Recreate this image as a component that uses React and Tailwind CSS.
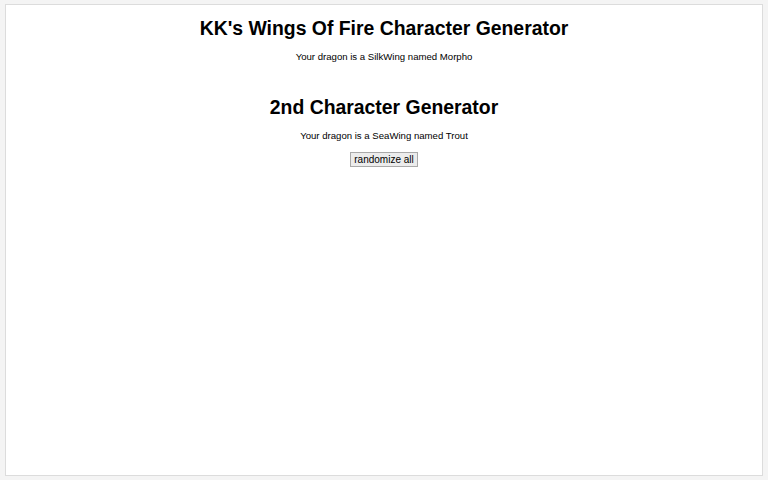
import { useState } from 'react';

const TRIBES = ['SilkWing', 'SeaWing', 'MudWing', 'SandWing', 'SkyWing', 'NightWing', 'RainWing', 'IceWing', 'HiveWing', 'LeafWing'];
const NAMES = ['Morpho', 'Trout', 'Clay', 'Sunny', 'Peril', 'Starflight', 'Glory', 'Winter', 'Cricket', 'Sundew'];

const pick = (list) => list[Math.floor(Math.random() * list.length)];

export default function App() {
  const [first, setFirst] = useState({ tribe: 'SilkWing', name: 'Morpho' });
  const [second, setSecond] = useState({ tribe: 'SeaWing', name: 'Trout' });

  // reroll both generators at once
  const randomizeAll = () => {
    setFirst({ tribe: pick(TRIBES), name: pick(NAMES) });
    setSecond({ tribe: pick(TRIBES), name: pick(NAMES) });
  };

  return (
    <div className="h-[480px] w-full bg-[#f4f4f4] px-[5px] pt-[4px] pb-[4px] font-['Liberation_Sans',Arial,sans-serif] text-black">
      <div className="flex h-full flex-col items-center border border-[#dcdcdc] bg-white">
        <h1 className="mt-[12px] text-[19.4px] leading-[22px] font-bold">KK's Wings Of Fire Character Generator</h1>
        <p className="mt-[12px] text-[9.6px] leading-[12px]">
          Your dragon is a {first.tribe} named {first.name}
        </p>

        <h2 className="mt-[33px] text-[19.4px] leading-[22px] font-bold">2nd Character Generator</h2>
        <p className="mt-[12px] text-[9.6px] leading-[12px]">
          Your dragon is a {second.tribe} named {second.name}
        </p>
        <button
          className="mt-[10px] h-[15px] border border-[#a9a9a9] bg-[#ececec] px-[3px] text-[10px] leading-[12px]"
          onClick={randomizeAll}
        >
          randomize all
        </button>
      </div>
    </div>
  );
}
